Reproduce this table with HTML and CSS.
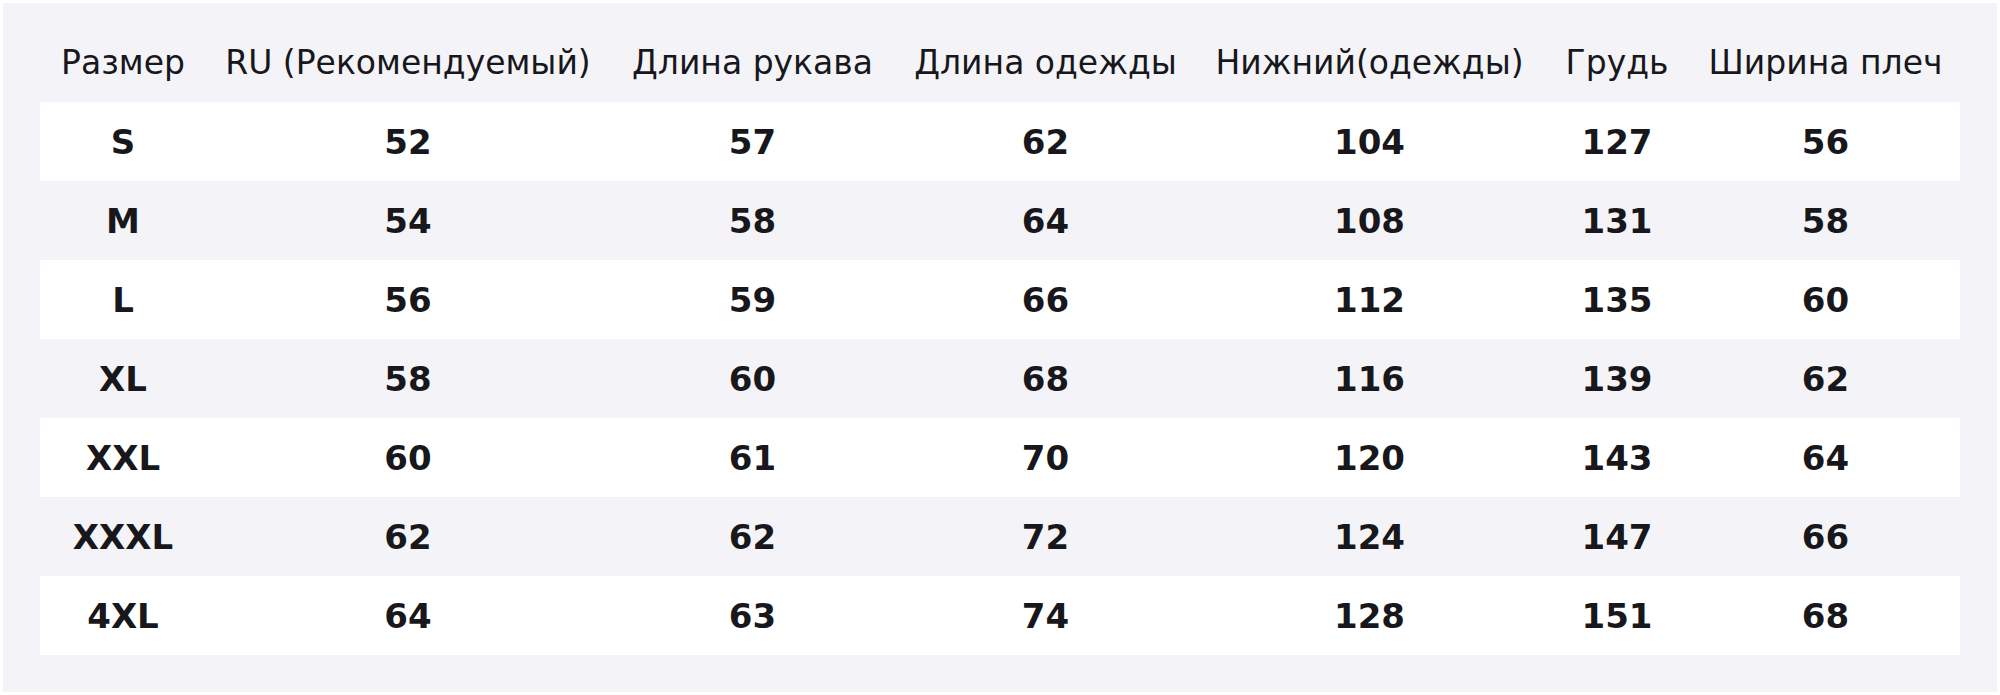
FILE: index.html
```html
<!DOCTYPE html>
<html lang="ru">
<head>
<meta charset="utf-8">
<title>Таблица размеров</title>
<link rel="stylesheet" href="styles.css">
</head>
<body>
<div class="panel">
  <table class="sizes">
    <colgroup>
      <col class="c1"><col class="c2"><col class="c3"><col class="c4"><col class="c5"><col class="c6"><col class="c7">
    </colgroup>
    <thead>
      <tr>
        <th>Размер</th>
        <th>RU (Рекомендуемый)</th>
        <th>Длина рукава</th>
        <th>Длина одежды</th>
        <th>Нижний(одежды)</th>
        <th>Грудь</th>
        <th>Ширина плеч</th>
      </tr>
    </thead>
    <tbody>
      <tr><td>S</td><td>52</td><td>57</td><td>62</td><td>104</td><td>127</td><td>56</td></tr>
      <tr><td>M</td><td>54</td><td>58</td><td>64</td><td>108</td><td>131</td><td>58</td></tr>
      <tr><td>L</td><td>56</td><td>59</td><td>66</td><td>112</td><td>135</td><td>60</td></tr>
      <tr><td>XL</td><td>58</td><td>60</td><td>68</td><td>116</td><td>139</td><td>62</td></tr>
      <tr><td>XXL</td><td>60</td><td>61</td><td>70</td><td>120</td><td>143</td><td>64</td></tr>
      <tr><td>XXXL</td><td>62</td><td>62</td><td>72</td><td>124</td><td>147</td><td>66</td></tr>
      <tr><td>4XL</td><td>64</td><td>63</td><td>74</td><td>128</td><td>151</td><td>68</td></tr>
    </tbody>
  </table>
</div>
</body>
</html>
```

FILE: styles.css
```css
html, body {
  margin: 0;
  padding: 0;
  background: #ffffff;
}

body {
  padding: 3px;
  font-family: "DejaVu Sans", "Noto Sans", sans-serif;
  color: #17171c;
}

.panel {
  width: 1994px;
  height: 689px;
  box-sizing: border-box;
  background: #f4f4f8;
  padding: 20px 37px 0 37px;
}

.sizes {
  width: 1920px;
  border-collapse: collapse;
  table-layout: fixed;
}

.c1 { width: 166px; }
.c2 { width: 404px; }
.c3 { width: 285px; }
.c4 { width: 301px; }
.c5 { width: 347px; }
.c6 { width: 148px; }
.c7 { width: 269px; }

.sizes th {
  height: 79px;
  padding: 0;
  font-size: 33px;
  font-weight: normal;
  text-align: center;
  vertical-align: middle;
  white-space: nowrap;
}

.sizes td {
  height: 79px;
  padding: 0;
  font-size: 34px;
  font-weight: bold;
  text-align: center;
  vertical-align: middle;
}

.sizes tbody tr:nth-child(odd) {
  background: #ffffff;
}
```
